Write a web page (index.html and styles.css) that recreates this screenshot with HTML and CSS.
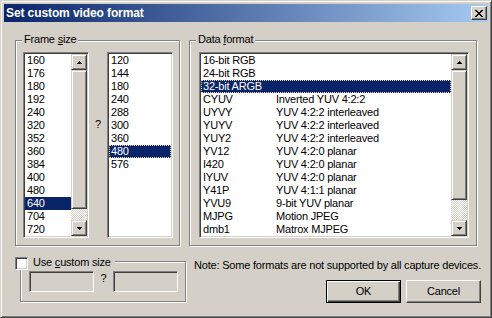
FILE: index.html
```html
<!DOCTYPE html>
<html lang="en">
<head>
    <meta charset="UTF-8">
    <link rel="stylesheet" href="styles.css">
    <title>Set custom video format</title>
</head>
<body>

    <div class="window">
        <div class="titlebar">
            <span class="title">Set custom video format</span>
            <button class="close" aria-label="Close">
                <svg width="8" height="7" viewBox="0 0 8 7"><path d="M0 0h2v1h-2zM6 0h2v1h-2zM1 1h2v1h-2zM5 1h2v1h-2zM2 2h4v1h-4zM3 3h2v1h-2zM2 4h4v1h-4zM1 5h2v1h-2zM5 5h2v1h-2zM0 6h2v1h-2zM6 6h2v1h-2z"/></svg>
            </button>
        </div>

        <div class="client">
            <div class="top">
                <div class="group frame-group">
                    <span class="legend">Frame <u>s</u>ize</span>
                    <div class="listbox size-list">
                        <ul class="items">
                            <li>160</li>
                            <li>176</li>
                            <li>180</li>
                            <li>192</li>
                            <li>240</li>
                            <li>320</li>
                            <li>352</li>
                            <li>360</li>
                            <li>384</li>
                            <li>400</li>
                            <li>480</li>
                            <li class="sel">640</li>
                            <li>704</li>
                            <li>720</li>
                        </ul>
                        <div class="scrollbar">
                            <div class="sb-btn"><svg width="5" height="3" viewBox="0 0 5 3"><path d="M2 0h1v1h-1zM1 1h3v1h-3zM0 2h5v1h-5z"/></svg></div>
                            <div class="thumb thumb-size"></div>
                            <div class="track"></div>
                            <div class="sb-btn"><svg width="5" height="3" viewBox="0 0 5 3"><path d="M0 0h5v1h-5zM1 1h3v1h-3zM2 2h1v1h-1z"/></svg></div>
                        </div>
                    </div>
                    <span class="times">?</span>
                    <div class="listbox size-list">
                        <ul class="items">
                            <li>120</li>
                            <li>144</li>
                            <li>180</li>
                            <li>240</li>
                            <li>288</li>
                            <li>300</li>
                            <li>360</li>
                            <li class="sel focus">480</li>
                            <li>576</li>
                        </ul>
                    </div>
                </div>

                <div class="group data-group">
                    <span class="legend">Data <u>f</u>ormat</span>
                    <div class="listbox format-list">
                        <ul class="items">
                            <li><span class="code">16-bit RGB</span></li>
                            <li><span class="code">24-bit RGB</span></li>
                            <li class="sel focus"><span class="code">32-bit ARGB</span></li>
                            <li><span class="code">CYUV</span>Inverted YUV 4:2:2</li>
                            <li><span class="code">UYVY</span>YUV 4:2:2 interleaved</li>
                            <li><span class="code">YUYV</span>YUV 4:2:2 interleaved</li>
                            <li><span class="code">YUY2</span>YUV 4:2:2 interleaved</li>
                            <li><span class="code">YV12</span>YUV 4:2:0 planar</li>
                            <li><span class="code">I420</span>YUV 4:2:0 planar</li>
                            <li><span class="code">IYUV</span>YUV 4:2:0 planar</li>
                            <li><span class="code">Y41P</span>YUV 4:1:1 planar</li>
                            <li><span class="code">YVU9</span>9-bit YUV planar</li>
                            <li><span class="code">MJPG</span>Motion JPEG</li>
                            <li><span class="code">dmb1</span>Matrox MJPEG</li>
                        </ul>
                        <div class="scrollbar">
                            <div class="sb-btn"><svg width="5" height="3" viewBox="0 0 5 3"><path d="M2 0h1v1h-1zM1 1h3v1h-3zM0 2h5v1h-5z"/></svg></div>
                            <div class="thumb thumb-format"></div>
                            <div class="track"></div>
                            <div class="sb-btn"><svg width="5" height="3" viewBox="0 0 5 3"><path d="M0 0h5v1h-5zM1 1h3v1h-3zM2 2h1v1h-1z"/></svg></div>
                        </div>
                    </div>
                </div>
            </div>

            <div class="bottom">
                <div class="custom">
                    <label class="check"><span class="box"></span><span class="check-text">Use <u>c</u>ustom size</span></label>
                    <div class="group custom-group">
                        <span class="edit"></span>
                        <span class="times small">?</span>
                        <span class="edit"></span>
                    </div>
                </div>
                <div class="actions">
                    <p class="note">Note: Some formats are not supported by all capture devices.</p>
                    <div class="buttons">
                        <button class="btn default">OK</button>
                        <button class="btn">Cancel</button>
                    </div>
                </div>
            </div>
        </div>
    </div>

</body>
</html>
```

FILE: styles.css
```css
* {
    box-sizing: border-box;
}

body {
    margin: 0;
    font: 11px/13px "Liberation Sans", Arial, sans-serif;
    letter-spacing: -0.2px;
    color: #000;
    background: #d4d0c8;
}

.window {
    width: 492px;
    height: 318px;
    display: flex;
    flex-direction: column;
    padding: 3px;
    background: #d4d0c8;
    border: 1px solid;
    border-color: #d4d0c8 #404040 #404040 #d4d0c8;
    box-shadow: inset 1px 1px #fff, inset -1px -1px #808080;
}

/* title bar */
.titlebar {
    height: 18px;
    display: flex;
    align-items: center;
    justify-content: space-between;
    padding: 0 1px 0 2px;
    background: linear-gradient(to right, #0a246a, #a6caf0);
}

.title {
    color: #fff;
    font-weight: bold;
    font-size: 12px;
    letter-spacing: -0.1px;
}

.close {
    width: 16px;
    height: 14px;
    padding: 0;
    display: flex;
    align-items: center;
    justify-content: center;
    background: #d4d0c8;
    border: 1px solid;
    border-color: #fff #404040 #404040 #fff;
    box-shadow: inset -1px -1px #808080;
}

.client {
    flex: 1;
    padding: 18px 9px 0 11px;
}

/* group boxes */
.top {
    display: flex;
    gap: 9px;
    height: 206px;
}

.group {
    position: relative;
    border: 1px solid #808080;
    box-shadow: inset 1px 1px #fff, 1px 1px #fff;
}

.legend {
    position: absolute;
    top: -8px;
    left: 6px;
    padding: 0 2px;
    background: #d4d0c8;
}

.frame-group {
    width: 165px;
    display: flex;
    align-items: flex-start;
    padding: 11px 0 0 7px;
}

.data-group {
    width: 288px;
    padding: 11px 0 0 9px;
}

.times {
    width: 18px;
    margin-top: 66px;
    text-align: center;
}

/* list boxes */
.listbox {
    height: 186px;
    display: flex;
    padding: 1px;
    background: #fff;
    border: 1px solid;
    border-color: #808080 #fff #fff #808080;
    box-shadow: inset 1px 1px #404040, inset -1px -1px #d4d0c8;
}

.size-list {
    width: 66px;
}

.format-list {
    width: 270px;
}

.items {
    flex: 1;
    margin: 0;
    padding: 0;
    list-style: none;
    overflow: hidden;
}

.items li {
    height: 13px;
    display: flex;
    padding-left: 2px;
    white-space: nowrap;
}

.items li.sel {
    background: #0a246a;
    color: #fff;
}

.items li.focus {
    outline: 1px dotted #f5db95;
    outline-offset: -1px;
}

.code {
    width: 73px;
    flex-shrink: 0;
}

/* scroll bars */
.scrollbar {
    width: 16px;
    display: flex;
    flex-direction: column;
}

.sb-btn,
.thumb {
    background: #d4d0c8;
    border: 1px solid;
    border-color: #d4d0c8 #404040 #404040 #d4d0c8;
    box-shadow: inset 1px 1px #fff, inset -1px -1px #808080;
}

.sb-btn {
    height: 16px;
    display: flex;
    align-items: center;
    justify-content: center;
}

.thumb-size {
    height: 139px;
}

.thumb-format {
    height: 130px;
}

.track {
    flex: 1;
    background: repeating-conic-gradient(#fff 0 25%, #d4d0c8 0 50%) 0 0 / 2px 2px;
}

/* bottom area */
.bottom {
    display: flex;
    align-items: flex-start;
}

.custom {
    position: relative;
    width: 171px;
    margin-top: 9px;
    padding: 6px 0 0 5px;
}

.check {
    position: absolute;
    top: 0;
    left: 0;
    z-index: 1;
    display: flex;
    align-items: flex-start;
    padding-right: 4px;
    background: #d4d0c8;
}

.box {
    width: 13px;
    height: 13px;
    margin: 2px 5px 0 0;
    background: #fff;
    border: 1px solid;
    border-color: #808080 #fff #fff #808080;
    box-shadow: inset 1px 1px #404040, inset -1px -1px #d4d0c8;
}

.check-text {
    margin-top: 1px;
}

.custom-group {
    width: 166px;
    height: 41px;
    display: flex;
    align-items: flex-start;
    padding: 9px 0 0 8px;
}

.edit {
    width: 65px;
    height: 21px;
    border: 1px solid;
    border-color: #808080 #fff #fff #808080;
    box-shadow: inset 1px 1px #404040, inset -1px -1px #d4d0c8;
}

.times.small {
    width: 19px;
    margin-top: 1px;
}

.actions {
    flex: 1;
    margin-left: 8px;
}

.note {
    margin: 13px 0 0;
    white-space: nowrap;
}

.buttons {
    display: flex;
    justify-content: flex-end;
    gap: 5px;
    margin-top: 8px;
}

.btn {
    width: 75px;
    height: 23px;
    padding: 0;
    font: inherit;
    letter-spacing: -0.2px;
    color: #000;
    background: #d4d0c8;
    border: 1px solid;
    border-color: #fff #404040 #404040 #fff;
    box-shadow: inset -1px -1px #808080;
}

.btn.default {
    border-color: #000;
    box-shadow: inset 1px 1px #fff, inset -1px -1px #404040, inset -2px -2px #808080;
}
```
